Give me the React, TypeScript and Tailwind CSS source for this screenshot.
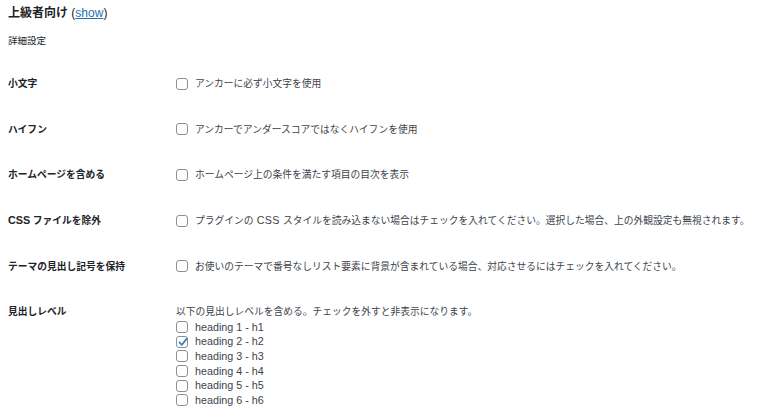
import React from "react";

const FONT = '"Liberation Sans", "Noto Sans CJK JP", sans-serif';

function Box({ checked = false }: { checked?: boolean }) {
  return (
    <span className="relative inline-block w-[12px] h-[12px] shrink-0 border border-[#8c8f94] rounded-[3px] bg-white mr-[7px]">
      {checked && (
        <svg
          viewBox="0 0 12 12"
          className="absolute left-[0px] top-[-1px] w-[12px] h-[12px]"
        >
          <path
            d="M2.4 6.4 L4.8 8.9 L9.8 2.6"
            fill="none"
            stroke="#3582c4"
            strokeWidth="1.7"
            strokeLinecap="round"
            strokeLinejoin="round"
          />
        </svg>
      )}
    </span>
  );
}

const rows: { key: string; label: React.ReactNode; text: React.ReactNode }[] = [
  { key: "a", label: "小文字", text: "アンカーに必ず小文字を使用" },
  { key: "b", label: "ハイフン", text: "アンカーでアンダースコアではなくハイフンを使用" },
  { key: "c", label: "ホームページを含める", text: "ホームページ上の条件を満たす項目の目次を表示" },
  {
    key: "d",
    label: (
      <>
        <span className="text-[10.75px]">CSS</span> ファイルを除外
      </>
    ),
    text: (
      <>
        プラグインの<span className="text-[10.75px] tracking-[0.3px]"> CSS </span>
        スタイルを読み込まない場合はチェックを入れてください。選択した場合、上の外観設定も無視されます。
      </>
    ),
  },
  {
    key: "e",
    label: "テーマの見出し記号を保持",
    text: "お使いのテーマで番号なしリスト要素に背景が含まれている場合、対応させるにはチェックを入れてください。",
  },
];

const headings = [1, 2, 3, 4, 5, 6];

export default function App() {
  return (
    <div
      className="w-[768px] h-[412px] bg-white overflow-hidden pl-[8px] text-[#1d2327]"
      style={{ fontFamily: FONT }}
    >
      <h2 className="text-[12px] font-bold leading-[16px] pt-[5px] text-[#1d2327]">
        上級者向け{" "}
        <span className="font-normal">
          (<a className="text-[#2271b1] underline">show</a>)
        </span>
      </h2>
      <p className="text-[9.5px] leading-[14px] mt-[12.5px] text-[#1d2327]">詳細設定</p>
      <div className="mt-[13.3px]">
        {rows.map((r) => (
          <div key={r.key} className="grid grid-cols-[168px_1fr] py-[15.15px]">
            <div className="text-[9.75px] leading-[15.4px] font-bold text-[#1d2327]">{r.label}</div>
            <div className="flex items-center text-[9.75px] leading-[15.4px] text-[#3c434a]">
              <Box />
              <span>{r.text}</span>
            </div>
          </div>
        ))}
        <div className="grid grid-cols-[168px_1fr] pt-[14.4px]">
          <div className="text-[9.75px] leading-[15.4px] font-bold text-[#1d2327]">見出しレベル</div>
          <div className="text-[9.75px] text-[#3c434a]">
            <p className="leading-[15.4px]">
              以下の見出しレベルを含める。チェックを外すと非表示になります。
            </p>
            <div className="mt-[0.6px] flex flex-col">
              {headings.map((h) => (
                <div key={h} className="flex items-center h-[14.7px] leading-[14.7px] text-[10.75px]">
                  <Box checked={h === 2} />
                  <span>
                    heading {h} - h{h}
                  </span>
                </div>
              ))}
            </div>
          </div>
        </div>
      </div>
    </div>
  );
}
